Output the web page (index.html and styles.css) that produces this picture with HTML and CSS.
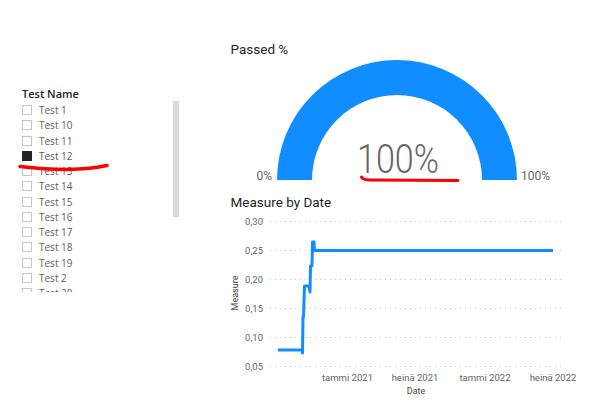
FILE: index.html
```html
<!DOCTYPE html>
<html>
<head>
<meta charset="utf-8">
<link rel="stylesheet" href="styles.css">
</head>
<body>
<div class="page">
  <div class="slicer">
    <div class="slicer-head">Test Name</div>
    <div class="slicer-body">
      <div class="items">
        <div class="item"><span class="box"></span><span>Test 1</span></div>
        <div class="item"><span class="box"></span><span>Test 10</span></div>
        <div class="item"><span class="box"></span><span>Test 11</span></div>
        <div class="item"><span class="box checked"></span><span>Test 12</span></div>
        <div class="item"><span class="box"></span><span>Test 13</span></div>
        <div class="item"><span class="box"></span><span>Test 14</span></div>
        <div class="item"><span class="box"></span><span>Test 15</span></div>
        <div class="item"><span class="box"></span><span>Test 16</span></div>
        <div class="item"><span class="box"></span><span>Test 17</span></div>
        <div class="item"><span class="box"></span><span>Test 18</span></div>
        <div class="item"><span class="box"></span><span>Test 19</span></div>
        <div class="item"><span class="box"></span><span>Test 2</span></div>
        <div class="item"><span class="box"></span><span>Test 20</span></div>
      </div>
      <div class="scrollbar"></div>
    </div>
    <svg class="scribble" width="120" height="20" viewBox="0 158 120 20">
      <path d="M20 166.5 Q45 169.5 67 169.5 Q92 169 107 165.5" fill="none" stroke="#ff0000" stroke-width="3.5" stroke-linecap="round"/>
    </svg>
  </div>
  <div class="right">
    <div class="title">Passed %</div>
    <svg class="gauge" width="367" height="128" viewBox="225 57 367 128">
      <path d="M277 180 A120 120 0 0 1 517 180 L482 180 A85 85 0 0 0 312 180 Z" fill="#118DFF"/>
      <text class="gauge-min" x="272" y="179.5" text-anchor="end">0%</text>
      <text class="gauge-max" x="521" y="179.5">100%</text>
      <text class="gauge-val" x="398" y="173" text-anchor="middle" textLength="82" lengthAdjust="spacingAndGlyphs">100%</text>
      <path d="M361.5 177 Q363 180 370 180 L458 180.5" fill="none" stroke="#ff0000" stroke-width="3" stroke-linecap="round"/>
    </svg>
    <div class="title chart-title">Measure by Date</div>
    <svg class="chart" width="367" height="203" viewBox="225 210 367 203">
      <g class="grid" stroke="#c8c8c8" stroke-width="1" stroke-dasharray="1 4">
        <line x1="270" y1="221.5" x2="562" y2="221.5"/>
        <line x1="270" y1="250.5" x2="562" y2="250.5"/>
        <line x1="270" y1="279.5" x2="562" y2="279.5"/>
        <line x1="270" y1="308.5" x2="562" y2="308.5"/>
        <line x1="270" y1="337.5" x2="562" y2="337.5"/>
        <line x1="270" y1="366.5" x2="562" y2="366.5"/>
      </g>
      <g class="ylab" text-anchor="end">
        <text x="263" y="225">0,30</text>
        <text x="263" y="254">0,25</text>
        <text x="263" y="283">0,20</text>
        <text x="263" y="312">0,15</text>
        <text x="263" y="341">0,10</text>
        <text x="263" y="370">0,05</text>
      </g>
      <g class="xlab" text-anchor="middle">
        <text x="347.5" y="381">tammi 2021</text>
        <text x="415" y="381">heinä 2021</text>
        <text x="485" y="381">tammi 2022</text>
        <text x="553" y="381">heinä 2022</text>
      </g>
      <text class="axis-title" x="416" y="393.5" text-anchor="middle">Date</text>
      <text class="axis-title" x="238" y="293" text-anchor="middle" transform="rotate(-90 238 293)">Measure</text>
      <polyline fill="none" stroke="#118DFF" stroke-width="3" stroke-linejoin="round"
        points="278,350 302,350 302.5,353 303,317 303.5,317 304.5,286 309,286 310,292 310.5,266 312,266 312.5,242 314,242 314.5,250.5 553,250.5"/>
    </svg>
  </div>
</div>
</body>
</html>
```

FILE: styles.css
```css
html, body {
  margin: 0;
  padding: 0;
  background: #ffffff;
}
body {
  width: 592px;
  height: 413px;
  overflow: hidden;
  font-family: Roboto, "Open Sans", sans-serif;
}
.page {
  display: flex;
  width: 592px;
  height: 413px;
}
.slicer {
  position: relative;
  width: 225px;
  box-sizing: border-box;
  padding: 86px 0 0 22px;
  font-family: "Open Sans", "Noto Sans", sans-serif;
}
.slicer-head {
  font-size: 11px;
  font-weight: 600;
  color: #252423;
  line-height: 15px;
  height: 15px;
}
.slicer-body {
  display: flex;
  align-items: flex-start;
}
.items {
  width: 151px;
  height: 190.5px;
  overflow: hidden;
  padding-top: 1.5px;
  box-sizing: border-box;
}
.item {
  display: flex;
  align-items: center;
  gap: 7px;
  height: 15.25px;
  font-size: 10px;
  color: #605e5c;
}
.box {
  width: 10px;
  height: 10px;
  box-sizing: border-box;
  border: 1px solid #c8c6c4;
  background: #fff;
  flex: none;
}
.box.checked {
  background: #252423;
  border-color: #252423;
}
.scrollbar {
  width: 6px;
  height: 116px;
  background: #dadada;
}
.scribble {
  position: absolute;
  left: 0;
  top: 158px;
}
.right {
  display: flex;
  flex-direction: column;
  width: 367px;
  padding-top: 41px;
}
.title {
  font-size: 13.5px;
  line-height: 16px;
  height: 16px;
  color: #252423;
  padding-left: 5.5px;
}
.gauge, .chart {
  display: block;
}
.chart-title {
  margin-top: 9px;
}
.gauge-min, .gauge-max {
  font-size: 12px;
  fill: #666666;
  font-family: Roboto, sans-serif;
}
.gauge-val {
  font-size: 40px;
  font-weight: 300;
  fill: #666666;
  font-family: Roboto, sans-serif;
}
.ylab text, .xlab text {
  font-size: 9.5px;
  fill: #666666;
  font-family: Roboto, sans-serif;
}
.axis-title {
  font-size: 9px;
  fill: #444444;
  font-family: Roboto, sans-serif;
}
```
